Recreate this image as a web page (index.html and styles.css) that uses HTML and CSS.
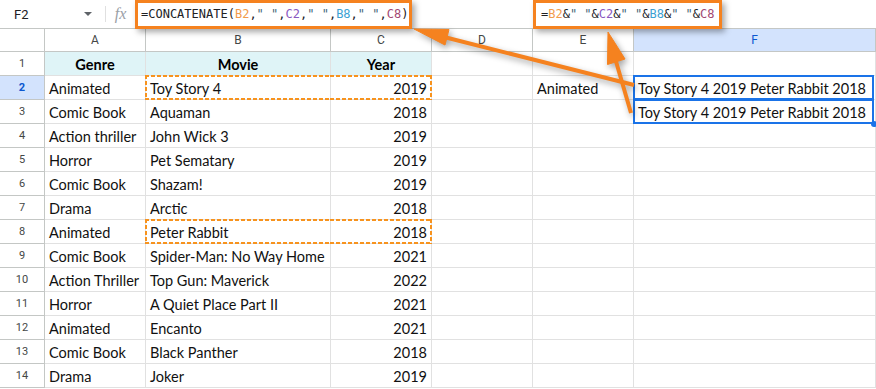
FILE: index.html
```html
<!DOCTYPE html>
<html lang="en">
<head>
    <meta charset="UTF-8">
    <meta name="viewport" content="width=device-width, initial-scale=1.0">
    <title>CONCATENATE in Google Sheets</title>
    <link rel="stylesheet" href="styles.css">
</head>
<body>
<div class="sheet">
    <div class="formula-bar">
        <div class="name-box">
            <span class="cell-ref">F2</span>
            <span class="caret"></span>
        </div>
        <div class="fx">fx</div>
        <div class="formula main">=CONCATENATE(<span class="r1">B2</span>,<span class="str">" "</span>,<span class="r2">C2</span>,<span class="str">" "</span>,<span class="r3">B8</span>,<span class="str">" "</span>,<span class="r4">C8</span>)</div>
        <div class="formula alt">=<span class="r1">B2</span>&amp;<span class="str">" "</span>&amp;<span class="r2">C2</span>&amp;<span class="str">" "</span>&amp;<span class="r3">B8</span>&amp;<span class="str">" "</span>&amp;<span class="r4">C8</span></div>
    </div>

    <div class="grid">
        <div class="hd corner"></div>
        <div class="hd">A</div>
        <div class="hd">B</div>
        <div class="hd">C</div>
        <div class="hd">D</div>
        <div class="hd">E</div>
        <div class="hd active">F</div>

        <div class="num">1</div>
        <div class="c title">Genre</div>
        <div class="c title">Movie</div>
        <div class="c title">Year</div>
        <div class="c"></div><div class="c"></div><div class="c"></div>

        <div class="num active">2</div>
        <div class="c">Animated</div>
        <div class="c copy copy-l">Toy Story 4</div>
        <div class="c n copy copy-r">2019</div>
        <div class="c"></div>
        <div class="c">Animated</div>
        <div class="c picked">Toy Story 4 2019 Peter Rabbit 2018</div>

        <div class="num">3</div>
        <div class="c">Comic Book</div>
        <div class="c">Aquaman</div>
        <div class="c n">2018</div>
        <div class="c"></div><div class="c"></div>
        <div class="c picked handle">Toy Story 4 2019 Peter Rabbit 2018</div>

        <div class="num">4</div>
        <div class="c">Action thriller</div>
        <div class="c">John Wick 3</div>
        <div class="c n">2019</div>
        <div class="c"></div><div class="c"></div><div class="c"></div>

        <div class="num">5</div>
        <div class="c">Horror</div>
        <div class="c">Pet Sematary</div>
        <div class="c n">2019</div>
        <div class="c"></div><div class="c"></div><div class="c"></div>

        <div class="num">6</div>
        <div class="c">Comic Book</div>
        <div class="c">Shazam!</div>
        <div class="c n">2019</div>
        <div class="c"></div><div class="c"></div><div class="c"></div>

        <div class="num">7</div>
        <div class="c">Drama</div>
        <div class="c">Arctic</div>
        <div class="c n">2018</div>
        <div class="c"></div><div class="c"></div><div class="c"></div>

        <div class="num">8</div>
        <div class="c">Animated</div>
        <div class="c copy copy-l">Peter Rabbit</div>
        <div class="c n copy copy-r">2018</div>
        <div class="c"></div><div class="c"></div><div class="c"></div>

        <div class="num">9</div>
        <div class="c">Comic Book</div>
        <div class="c">Spider-Man: No Way Home</div>
        <div class="c n">2021</div>
        <div class="c"></div><div class="c"></div><div class="c"></div>

        <div class="num">10</div>
        <div class="c">Action Thriller</div>
        <div class="c">Top Gun: Maverick</div>
        <div class="c n">2022</div>
        <div class="c"></div><div class="c"></div><div class="c"></div>

        <div class="num">11</div>
        <div class="c">Horror</div>
        <div class="c">A Quiet Place Part II</div>
        <div class="c n">2021</div>
        <div class="c"></div><div class="c"></div><div class="c"></div>

        <div class="num">12</div>
        <div class="c">Animated</div>
        <div class="c">Encanto</div>
        <div class="c n">2021</div>
        <div class="c"></div><div class="c"></div><div class="c"></div>

        <div class="num">13</div>
        <div class="c">Comic Book</div>
        <div class="c">Black Panther</div>
        <div class="c n">2018</div>
        <div class="c"></div><div class="c"></div><div class="c"></div>

        <div class="num">14</div>
        <div class="c">Drama</div>
        <div class="c">Joker</div>
        <div class="c n">2019</div>
        <div class="c"></div><div class="c"></div><div class="c"></div>
    </div>

    <!-- callout arrows drawn over the sheet -->
    <svg class="arrows" width="876" height="389" viewBox="0 0 876 389">
        <g fill="#f5821f" stroke="#f5821f">
            <line x1="634" y1="85" x2="444" y2="37" stroke-width="4"/>
            <polygon points="414,29 449,29.5 445,45" stroke-width="1"/>
            <line x1="631" y1="113" x2="615" y2="58" stroke-width="4"/>
            <polygon points="608,32 625,59 607.5,64.5" stroke-width="1"/>
        </g>
    </svg>
</div>
</body>
</html>
```

FILE: styles.css
```css
body {
    margin: 0;
    background: #fff;
    font-family: Roboto, "Liberation Sans", Arial, sans-serif;
}

.sheet {
    position: relative;
    width: 876px;
    height: 389px;
    overflow: hidden;
}

/* formula bar */

.formula-bar {
    display: flex;
    align-items: stretch;
    height: 28px;
    border-bottom: 1px solid #c4c7c5;
}

.name-box {
    width: 106px;
    display: flex;
    align-items: center;
    justify-content: space-between;
    padding: 0 13px 0 14px;
    box-sizing: border-box;
    border-right: 1px solid #e0e0e0;
    margin: 6px 0;
}

.cell-ref {
    font-size: 13px;
    color: #202124;
}

.caret {
    width: 0;
    height: 0;
    border-left: 4px solid transparent;
    border-right: 4px solid transparent;
    border-top: 4px solid #5f6368;
}

.fx {
    width: 29px;
    text-align: center;
    line-height: 28px;
    font-family: "Liberation Serif", serif;
    font-style: italic;
    font-size: 16px;
    color: #9aa0a6;
}

.formula {
    font-family: "DejaVu Sans Mono", "Liberation Mono", monospace;
    font-size: 12px;
    color: #202124;
    line-height: 23px;
    height: 29px;
    box-sizing: border-box;
    border: 3px solid #f5821f;
    background: #fff;
    position: relative;
    z-index: 2;
    box-shadow: 3px 3px 6px rgba(0, 0, 0, 0.35);
    white-space: pre;
}

.formula.main {
    width: 277px;
    padding-left: 3px;
}

.formula.alt {
    width: 189px;
    margin-left: 121px;
    padding-left: 5px;
}

.r1 { color: #f29b4b; }
.r2 { color: #8a58bf; }
.r3 { color: #3ba1d3; }
.r4 { color: #a24873; }
.str { color: #3f6676; }

/* grid */

.grid {
    display: grid;
    grid-template-columns: 45px 101px 185px 101px 101px 101px 242px;
    grid-template-rows: 23px repeat(14, 24px);
}

.hd {
    font-size: 12px;
    color: #444746;
    text-align: center;
    line-height: 22px;
    border-right: 1px solid #c4c7c5;
    border-bottom: 1px solid #c4c7c5;
    box-sizing: border-box;
}

.hd.active {
    background: #d3e3fd;
    color: #0b57d0;
}

.num {
    font-size: 11px;
    color: #444746;
    text-align: center;
    line-height: 23px;
    border-right: 1px solid #c4c7c5;
    border-bottom: 1px solid #c4c7c5;
    box-sizing: border-box;
}

.num.active {
    background: #d3e3fd;
    color: #0b57d0;
    font-weight: bold;
}

.c {
    position: relative;
    font-family: Lato, "Liberation Sans", sans-serif;
    font-size: 14.5px;
    color: #111;
    line-height: 23px;
    padding: 1px 4px 0;
    border-right: 1px solid #e1e1e1;
    border-bottom: 1px solid #e1e1e1;
    box-sizing: border-box;
    white-space: nowrap;
    overflow: visible;
}

.c.n {
    text-align: right;
}

.c.title {
    background: #dff4f7;
    font-weight: bold;
    text-align: center;
    color: #000;
}

/* copied range, dashed orange */

.copy::after {
    content: "";
    position: absolute;
    top: -1px;
    bottom: -1px;
    left: -1px;
    right: -1px;
    pointer-events: none;
    background:
        repeating-linear-gradient(90deg, #f7931e 0 4px, transparent 4px 6px) top / 100% 2px no-repeat,
        repeating-linear-gradient(90deg, #f7931e 0 4px, transparent 4px 6px) bottom / 100% 2px no-repeat;
}

.copy-l::before,
.copy-r::before {
    content: "";
    position: absolute;
    top: -1px;
    bottom: -1px;
    width: 2px;
    background: repeating-linear-gradient(180deg, #f7931e 0 4px, transparent 4px 6px);
}

.copy-l::before { left: -1px; }
.copy-r::before { right: -1px; }

/* selected result cells */

.picked {
    padding-left: 4px;
}

.picked::after {
    content: "";
    position: absolute;
    top: -1px;
    left: -1px;
    right: 1px;
    bottom: -1px;
    border: 2px solid #1a73e8;
    pointer-events: none;
}

.handle::before {
    content: "";
    position: absolute;
    right: -2px;
    bottom: -4px;
    width: 6px;
    height: 6px;
    border-radius: 50%;
    background: #1a73e8;
    z-index: 1;
}

.arrows {
    position: absolute;
    left: 0;
    top: 0;
    pointer-events: none;
    z-index: 3;
    filter: drop-shadow(2px 3px 3px rgba(0, 0, 0, 0.35));
}
```
